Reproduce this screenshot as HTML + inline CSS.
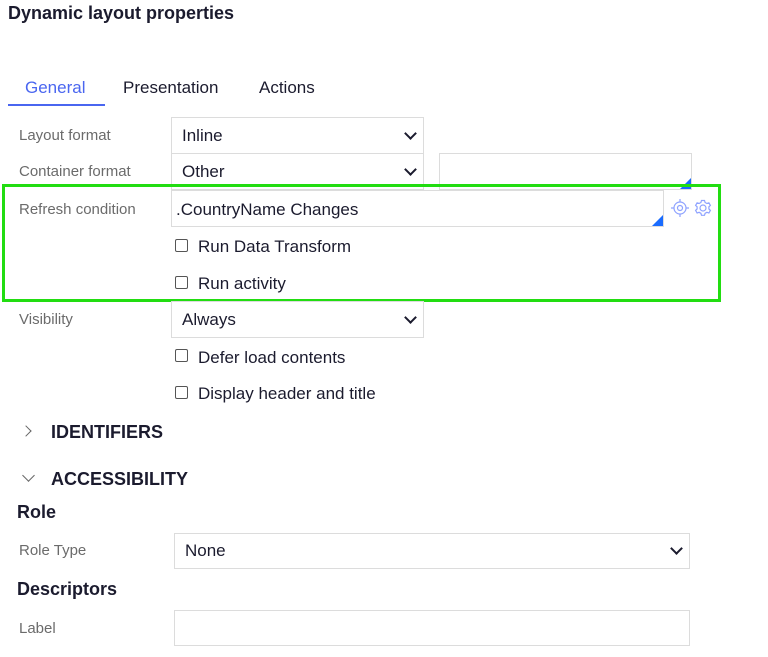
<!DOCTYPE html>
<html><head><style>
body{margin:0;width:768px;height:657px;background:#fff;font-family:"Liberation Sans",sans-serif;position:relative;overflow:hidden;color:#1b1b2e}
.a{position:absolute;white-space:nowrap}
.lbl{font-size:15px;color:#6b6b6b}
.box{position:absolute;border:1px solid #dcdcdc;box-sizing:border-box;background:#fff}
.val{font-size:17px;color:#1b1b2e}
.chev{position:absolute;width:7px;height:7px;border-right:2px solid #1b1b2e;border-bottom:2px solid #1b1b2e;transform:rotate(45deg)}
.cb{position:absolute;width:11px;height:11px;border:1.5px solid #555;border-radius:2px}
.tri{position:absolute;width:0;height:0;border-left:11px solid transparent;border-bottom:11px solid #1a6cff}
.h{font-weight:bold;font-size:18px;color:#1b1b2e}
</style></head><body>
<div class="a h" style="left:8px;top:3px;font-size:18px">Dynamic layout properties</div>
<div class="a" style="left:25px;top:78px;font-size:17px;color:#4a66f0">General</div>
<div class="a" style="left:123px;top:78px;font-size:17px">Presentation</div>
<div class="a" style="left:259px;top:78px;font-size:17px">Actions</div>
<div class="a" style="left:8px;top:104px;width:97px;height:2px;background:#4a66f0"></div>

<div class="a lbl" style="left:19px;top:127px">Layout format</div>
<div class="box" style="left:171px;top:117px;width:253px;height:37px"></div>
<div class="a val" style="left:182px;top:126px">Inline</div>
<div class="chev" style="left:406px;top:129px"></div>

<div class="a lbl" style="left:19px;top:163px">Container format</div>
<div class="box" style="left:171px;top:153px;width:253px;height:37px"></div>
<div class="a val" style="left:182px;top:162px">Other</div>
<div class="chev" style="left:406px;top:165px"></div>
<div class="box" style="left:439px;top:153px;width:253px;height:37px"></div>
<div class="tri" style="left:680px;top:178px"></div>

<div class="a lbl" style="left:19px;top:201px">Refresh condition</div>
<div class="box" style="left:171px;top:190px;width:493px;height:37px"></div>
<div class="a val" style="left:176px;top:200px">.CountryName Changes</div>
<div class="tri" style="left:652px;top:215px"></div>
<svg class="a" style="left:668px;top:197px" width="50" height="24" viewBox="0 0 50 24" fill="none" stroke="#8ea2ff" stroke-width="1.2">
<circle cx="12" cy="11" r="6"/><circle cx="12" cy="11" r="2.5"/><path d="M12 2v3M12 17v3M3 11h3M18 11h3"/>
<circle cx="35" cy="11" r="3"/><path d="M33.5 3.5h3l.6 2 1.8 1 2-.7 1.5 2.6-1.5 1.4v2.2l1.5 1.4-1.5 2.6-2-.7-1.8 1-.6 2h-3l-.6-2-1.8-1-2 .7-1.5-2.6 1.5-1.4v-2.2l-1.5-1.4 1.5-2.6 2 .7 1.8-1z"/></svg>

<div class="cb" style="left:175px;top:239px"></div>
<div class="a val" style="left:198px;top:237px">Run Data Transform</div>
<div class="cb" style="left:175px;top:276px"></div>
<div class="a val" style="left:198px;top:274px">Run activity</div>
<div class="a" style="left:2px;top:184px;width:713px;height:112px;border:3px solid #22dd11"></div>

<div class="a lbl" style="left:19px;top:311px">Visibility</div>
<div class="box" style="left:171px;top:301px;width:253px;height:37px"></div>
<div class="a val" style="left:182px;top:310px">Always</div>
<div class="chev" style="left:406px;top:313px"></div>

<div class="cb" style="left:175px;top:349px"></div>
<div class="a val" style="left:198px;top:348px">Defer load contents</div>
<div class="cb" style="left:175px;top:386px"></div>
<div class="a val" style="left:198px;top:384px">Display header and title</div>

<div class="a" style="left:22px;top:427px;width:7px;height:7px;border-right:1.5px solid #666;border-top:1.5px solid #666;transform:rotate(45deg)"></div>
<div class="a h" style="left:51px;top:422px">IDENTIFIERS</div>
<div class="a" style="left:24px;top:471px;width:8px;height:8px;border-right:1.5px solid #666;border-bottom:1.5px solid #666;transform:rotate(45deg)"></div>
<div class="a h" style="left:51px;top:469px">ACCESSIBILITY</div>
<div class="a h" style="left:17px;top:502px">Role</div>
<div class="a lbl" style="left:19px;top:542px">Role Type</div>
<div class="box" style="left:174px;top:533px;width:516px;height:36px"></div>
<div class="a val" style="left:185px;top:541px">None</div>
<div class="chev" style="left:672px;top:544px"></div>
<div class="a h" style="left:17px;top:579px">Descriptors</div>
<div class="a lbl" style="left:19px;top:620px">Label</div>
<div class="box" style="left:174px;top:610px;width:516px;height:36px"></div>
</body></html>
